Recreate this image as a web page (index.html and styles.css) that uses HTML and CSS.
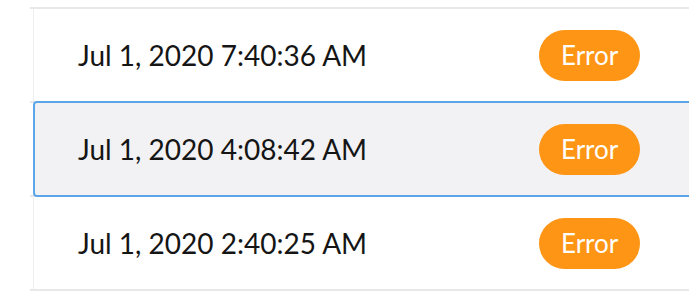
FILE: index.html
```html
<!DOCTYPE html>
<html>
<head>
<meta charset="utf-8">
<link rel="stylesheet" href="styles.css">
</head>
<body>
<div class="table">
  <div class="row">
    <div class="cell-wrap">
      <span class="date">Jul 1, 2020 7:40:36 AM</span>
      <span class="badge">Error</span>
    </div>
  </div>
  <div class="row">
    <div class="cell-wrap selected">
      <span class="date">Jul 1, 2020 4:08:42 AM</span>
      <span class="badge">Error</span>
    </div>
  </div>
  <div class="row">
    <div class="cell-wrap">
      <span class="date">Jul 1, 2020 2:40:25 AM</span>
      <span class="badge">Error</span>
    </div>
  </div>
</div>
</body>
</html>
```
FILE: styles.css
```css
html, body {
  margin: 0;
  padding: 0;
  background: #ffffff;
}
body {
  font-family: Lato, "Open Sans", sans-serif;
  overflow: hidden;
}
.table {
  margin-top: 7px;
  margin-left: 30px;
  margin-right: -8px;
  border-top: 2px solid #e8e8e8;
}
.row {
  border-bottom: 2px solid #e8e8e8;
}
.cell-wrap {
  margin-left: 3px;
  border-left: 1px solid #efefef;
  height: 92px;
  padding-left: 44px;
  display: grid;
  grid-template-columns: 461px auto;
  align-items: center;
  justify-content: start;
}
.cell-wrap.selected {
  margin-top: -2px;
  margin-bottom: -2px;
  border: 2px solid #5ba6e8;
  border-radius: 4px;
  background: #f2f2f4;
  padding-left: 43px;
}
.date {
  font-size: 28px;
  color: #151515;
  line-height: 32px;
}
.badge {
  display: inline-block;
  background: #ff9514;
  color: #ffffff;
  font-size: 26px;
  line-height: 51px;
  height: 51px;
  padding: 0 22px;
  border-radius: 26px;
}
```
